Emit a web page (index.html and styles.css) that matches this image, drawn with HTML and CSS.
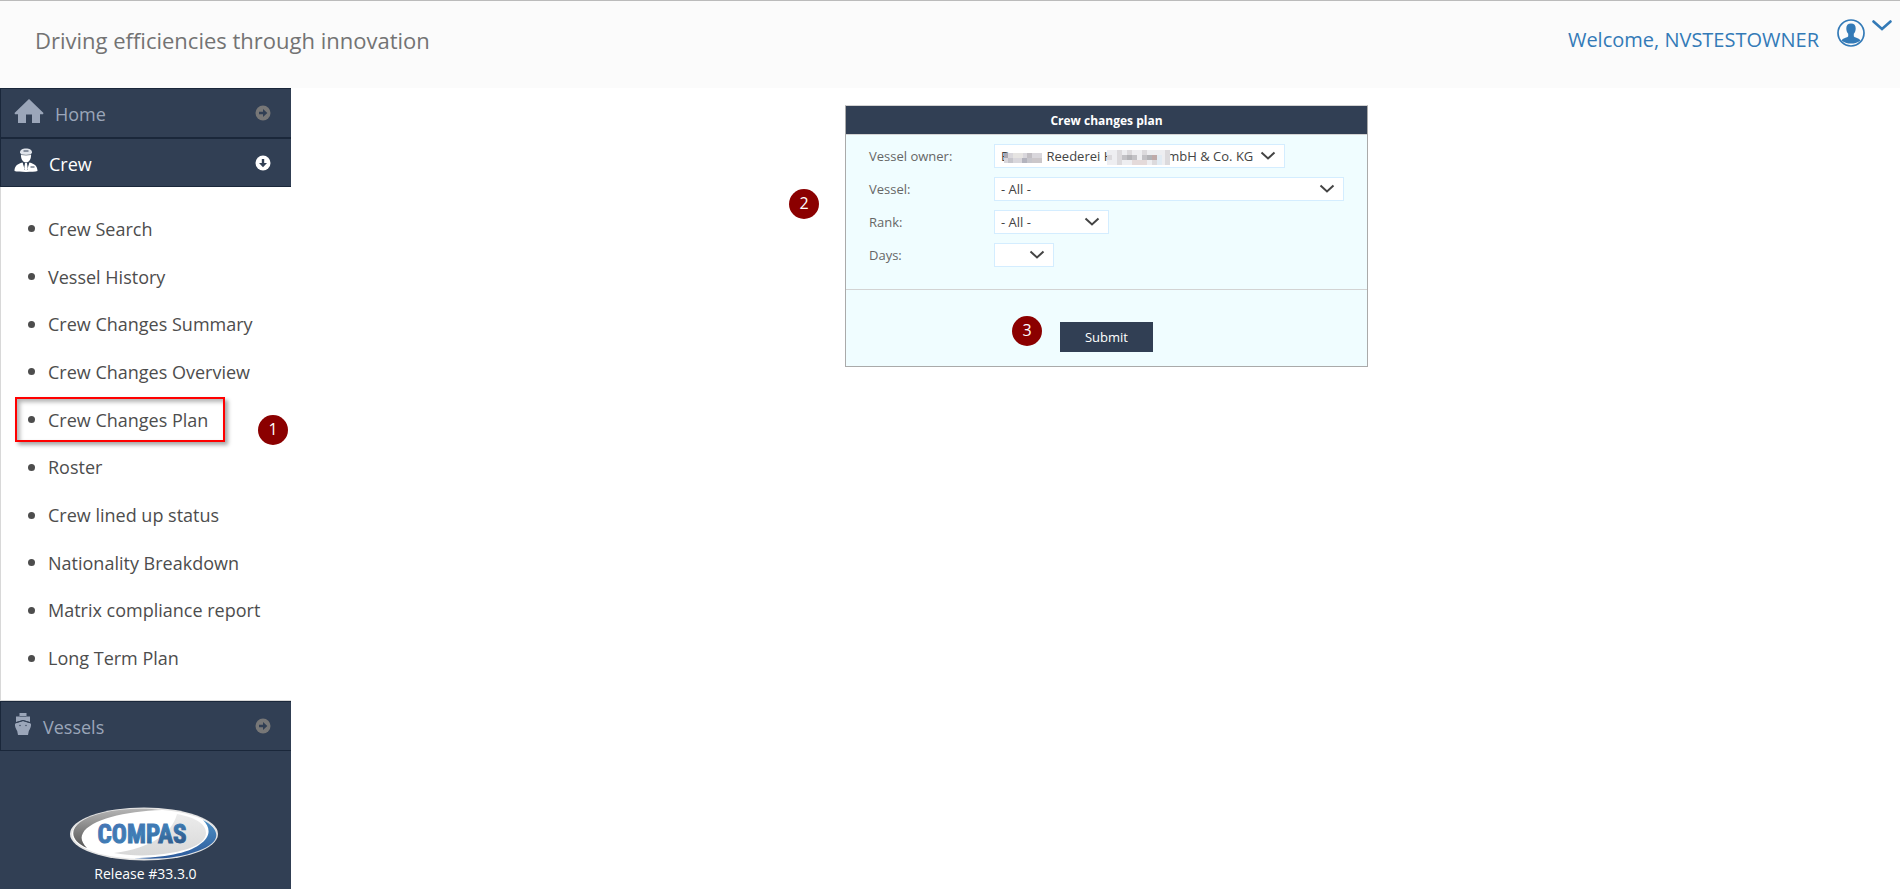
FILE: index.html
```
<!DOCTYPE html>
<html lang="en">
<head>
  <meta charset="UTF-8">
  <title>Crew changes plan</title>
  <link rel="stylesheet" href="styles.css">
</head>
<body>

  <header class="topbar">
    <div class="slogan">Driving efficiencies through innovation</div>
    <a href="#" class="user">
      <span class="welcome">Welcome, NVSTESTOWNER</span>
      <svg class="avatar" viewBox="0 0 28 28" width="28" height="28">
        <circle cx="14" cy="14" r="13" fill="none" stroke="#337ab7" stroke-width="1.7"/>
        <path d="M14 4.500c-3.200 0-4.800 1.900-4.700 5 0 2.200.7 4 1.900 5.200v2.500c-.4 1.500-6 1.700-6.500 4.500C7.500 23.800 11 24.600 14 24.600s6.500-.8 9.300-2.900c-.5-2.800-6.100-3-6.500-4.500v-2.500c1.200-1.200 1.900-3 1.900-5.200.1-3.100-1.500-5-4.700-5z" fill="#337ab7"/>
      </svg>
      <svg class="caret" viewBox="0 0 20 12" width="20" height="12">
        <path d="M1.500 2.500L10 10l8.500-7.500" fill="none" stroke="#337ab7" stroke-width="2.600" stroke-linecap="round"/>
      </svg>
    </a>
  </header>

  <div class="page">
    <nav class="sidebar">
      <a href="#" class="menu-item">
        <svg class="menu-icon" viewBox="0 0 30 26" width="30" height="26">
          <path d="M15 1l14.500 14-.5 1.300H26V25h-8v-8.500h-6V25H4v-8.700H1L.5 15z" fill="#9ba6b9"/>
        </svg>
        <span class="menu-text">Home</span>
        <svg class="arrow" viewBox="0 0 16 16" width="16" height="16">
          <circle cx="8" cy="8" r="7.500" fill="#777"/>
          <path d="M4 6.800h4V4l4.300 4L8 12V9.200H4z" fill="#313f54"/>
        </svg>
      </a>
      <a href="#" class="menu-item open">
        <svg class="menu-icon" viewBox="0 0 24 24" width="24" height="24">
          <path d="M6 4.500C6 1.800 8.500.5 12 .5s6 1.300 6 4l-1 1.800H7z" fill="#dfe3ea"/>
          <path d="M7 6h10c.4 4-1.300 8.500-5 8.500S6.600 10 7 6z" fill="#fff"/>
          <path d="M7 6.500q5 1.200 10 0" stroke="#313f54" stroke-width=".6" fill="none"/>
          <path d="M9.500 3h5" stroke="#313f54"/>
          <path d="M.5 23c0-5 3-7.300 8-8.500l3.500 8 3.500-8c5 1.200 8 3.500 8 8.500-4 1.200-19 1.200-23 0z" fill="#fff"/>
          <path d="M9.500 14.500L11 22M14.500 14.500L13 22M16.500 19h4" stroke="#313f54" fill="none"/>
          <path d="M11 15h2l.8 6-1.800 2-1.800-2z" fill="#fff"/>
        </svg>
        <span class="menu-text">Crew</span>
        <svg class="arrow" viewBox="0 0 16 16" width="16" height="16">
          <circle cx="8" cy="8" r="7.500" fill="#fff"/>
          <path d="M6.800 4v4H4l4 4.300L12 8H9.200V4z" fill="#313f54"/>
        </svg>
      </a>

      <ul class="submenu">
        <li><a href="#">Crew Search</a></li>
        <li><a href="#">Vessel History</a></li>
        <li><a href="#">Crew Changes Summary</a></li>
        <li><a href="#">Crew Changes Overview</a></li>
        <li class="marked"><a href="#">Crew Changes Plan</a><span class="step step-1">1</span></li>
        <li><a href="#">Roster</a></li>
        <li><a href="#">Crew lined up status</a></li>
        <li><a href="#">Nationality Breakdown</a></li>
        <li><a href="#">Matrix compliance report</a></li>
        <li><a href="#">Long Term Plan</a></li>
      </ul>

      <a href="#" class="menu-item">
        <svg class="menu-icon" viewBox="0 0 18 24" width="18" height="24">
          <path d="M5.500 1h7v3.500H16V10l-7-2-7 2V4.500h3.500z" fill="#9ba6b9"/>
          <path d="M5.500 4.500h7" stroke="#313f54" stroke-width=".6"/>
          <path d="M9 9l8 2.500c.3 3-.8 5.300-2.200 7.500l-.8 4H4l-.8-4C1.800 16.800.7 14.500 1 11.500z" fill="#9ba6b9"/>
          <path d="M1 11L9 8.500l8 2.500" stroke="#313f54" fill="none"/>
          <circle cx="6" cy="13.500" r=".7" fill="#313f54"/>
          <circle cx="12" cy="13.500" r=".7" fill="#313f54"/>
        </svg>
        <span class="menu-text">Vessels</span>
        <svg class="arrow" viewBox="0 0 16 16" width="16" height="16">
          <circle cx="8" cy="8" r="7.500" fill="#777"/>
          <path d="M4 6.800h4V4l4.300 4L8 12V9.200H4z" fill="#313f54"/>
        </svg>
      </a>

      <div class="release">
        <svg class="logo" viewBox="0 0 148 54" width="148" height="54">
          <defs>
            <linearGradient id="grey" x1="0" y1="0" x2="0" y2="1">
              <stop offset="0" stop-color="#b5b5b5"/>
              <stop offset="1" stop-color="#555"/>
            </linearGradient>
            <linearGradient id="blue" x1="0" y1="0" x2="0" y2="1">
              <stop offset="0" stop-color="#4c8fc4"/>
              <stop offset="1" stop-color="#2d5a9b"/>
            </linearGradient>
            <linearGradient id="shade" x1="0" y1="0" x2="0" y2="1">
              <stop offset="0" stop-color="#ececec"/>
              <stop offset="1" stop-color="#d8d8d8"/>
            </linearGradient>
            <linearGradient id="letters" x1="0" y1="0" x2="1" y2="1">
              <stop offset="0" stop-color="#4673b4"/>
              <stop offset=".5" stop-color="#3f7db5"/>
              <stop offset="1" stop-color="#2a4f7c"/>
            </linearGradient>
          </defs>
          <ellipse cx="74" cy="27" rx="74" ry="26.500" fill="#e4e4e4"/>
          <ellipse cx="74" cy="27" rx="72" ry="25" fill="#fff"/>
          <path d="M17 41C-5 31-1 14 32 6 52 1 76 1 92 3 55 4 20 13 13 26c-3 5-1 10 4 15z" fill="url(#grey)"/>
          <path d="M107 7c21 4 29 11 29 19 0 13-26 20-52 22-16 1-28 0-40-2 38-5 58-20 63-39z" fill="url(#shade)"/>
          <path d="M133 13c19 10 18 23-5 31-18 7-42 9-64 7 30 0 54-5 65-13 12-8 12-17 4-25z" fill="url(#blue)"/>
          <text x="72" y="36" text-anchor="middle" class="logo-text">COMPAS</text>
        </svg>
        <div class="version">Release #33.3.0</div>
      </div>
    </nav>

    <main class="content">
      <form class="panel">
        <h1 class="panel-title">Crew changes plan</h1>
        <div class="fields">
          <label for="owner">Vessel owner:</label>
          <div class="field">
            <select id="owner" class="owner">
              <option>B&nbsp;&nbsp;&nbsp;&nbsp;&nbsp;&nbsp;&nbsp;&nbsp;&nbsp;&nbsp; Reederei H&nbsp;&nbsp;&nbsp;&nbsp;&nbsp;&nbsp;&nbsp;&nbsp;&nbsp;&nbsp;&nbsp;&nbsp;&nbsp;&nbsp;&nbsp;&nbsp;mbH &amp; Co. KG</option>
            </select>
            <svg class="mask mask-1" viewBox="0 0 38 10" width="38" height="10">
              <path d="M0 0h38v10H0z" fill="#d9d7dc"/>
              <path d="M0 0h4v5H0z" fill="#aaa9b3"/>
              <path d="M9 0h10v5H9z" fill="#e6e4e2"/>
              <path d="M4 5h5v5H4zM23 5h5v5h-5z" fill="#c6c5cb"/>
              <path d="M18 5h5v5h-5z" fill="#b3b3bd"/>
              <path d="M23 0h5v5h-5z" fill="#c2bfc4"/>
              <path d="M28 5h10v5H28z" fill="#cbc7ca"/>
            </svg>
            <svg class="mask mask-2" viewBox="0 0 63 15" width="63" height="15">
              <path d="M0 0h63v15H0z" fill="#eeeef1"/>
              <path d="M0 5h5v5H0zM10 0h5v15h-5zM20 0h5v5h-5zM35 0h5v5h-5zM45 10h5v5h-5zM58 0h5v15h-5z" fill="#dcdadd"/>
              <path d="M15 5h5v5h-5zM25 5h5v5h-5zM35 5h5v5h-5z" fill="#c3c2c6"/>
              <path d="M20 5h5v5h-5zM40 5h5v5h-5z" fill="#b3b3b7"/>
              <path d="M45 5h5v5h-5z" fill="#bfaaa9"/>
              <path d="M50 5h5v10h-5z" fill="#e2ebf3"/>
              <path d="M25 10h15v5H25z" fill="#e4dada"/>
            </svg>
          </div>
          <label for="vessel">Vessel:</label>
          <div class="field"><select id="vessel" class="vessel"><option>- All -</option></select></div>
          <label for="rank">Rank:</label>
          <div class="field"><select id="rank" class="rank"><option>- All -</option></select></div>
          <label for="days">Days:</label>
          <div class="field"><select id="days" class="days"><option></option></select></div>
        </div>
        <div class="actions">
          <button type="submit">Submit</button>
          <span class="step step-3">3</span>
        </div>
        <span class="step step-2">2</span>
      </form>
    </main>
  </div>

</body>
</html>
```

FILE: styles.css
```
*,
*::before,
*::after {
  box-sizing: border-box;
}
body {
  margin: 0;
  min-height: 100vh;
  display: flex;
  flex-direction: column;
  font-family: "Segoe UI", "Open Sans", sans-serif;
  font-size: 13px;
  color: #666;
  background: #fff;
}
a {
  text-decoration: none;
}
.topbar {
  display: flex;
  justify-content: space-between;
  height: 88px;
  padding: 0 8px 0 35px;
  border-top: 1px solid #bbb;
  background: #fbfbfb;
}
.slogan {
  font-size: 22px;
  line-height: 78px;
  color: #737373;
}
.user {
  display: flex;
  align-items: flex-start;
  color: #337ab7;
}
.welcome {
  font-size: 20px;
  line-height: 78px;
}
.avatar {
  margin: 18px 7px 0 18px;
}
.caret {
  margin-top: 18px;
}
.page {
  flex: 1;
  display: flex;
}
.sidebar {
  width: 291px;
  display: flex;
  flex-direction: column;
  background: #313f54;
}
.menu-item {
  display: flex;
  align-items: center;
  height: 50px;
  padding: 0 20px 0 13px;
  border: 1px solid #1a273a;
  border-right: 0;
  font-size: 18px;
  color: #9ba6b9;
}
.menu-item.open {
  height: 49px;
  color: #fff;
}
.menu-icon {
  margin-bottom: 5px;
}
.menu-text {
  flex: 1;
  margin-left: 11px;
  padding-top: 2px;
}
.submenu {
  flex: 1;
  display: grid;
  grid-auto-rows: 1fr;
  margin: 0;
  padding: 18px 0;
  list-style: none;
  background: #fff;
  border-left: 1px solid #d8d8d8;
  border-bottom: 1px solid #d8d8d8;
}
.submenu li {
  position: relative;
  display: flex;
  align-items: center;
  padding-left: 27px;
}
.submenu li::before {
  content: "";
  width: 7px;
  height: 7px;
  margin-right: 13px;
  border-radius: 50%;
  background: #4d4d4d;
}
.submenu a {
  font-size: 18px;
  line-height: 24px;
  color: #4d4d4d;
}
/* highlight frame around the entry */
.marked::after {
  content: "";
  position: absolute;
  left: 14px;
  top: 1px;
  width: 210px;
  height: 45px;
  border: 2px solid #f00;
  box-shadow: 3px 3px 4px rgba(0,0,0,0.35), inset 3px 3px 4px rgba(0,0,0,0.3);
}
.step {
  position: absolute;
  width: 30px;
  height: 30px;
  border-radius: 50%;
  background: #8b0000;
  color: #fff;
  font-size: 16px;
  line-height: 29px;
  text-align: center;
}
.step-1 {
  left: 257px;
  top: 19px;
}
.step-2 {
  left: -57px;
  top: 83px;
}
.step-3 {
  left: 166px;
  top: 26px;
}
.release {
  height: 138px;
  padding: 56px 3px 0 0;
  text-align: center;
  color: #fff;
}
.logo {
  display: block;
  margin: 0 auto;
}
.logo-text {
  font-family: Impact, "Roboto Condensed", "Liberation Sans Narrow", "Liberation Sans", sans-serif;
  font-size: 25px;
  font-weight: bold;
  fill: url(#letters);
  stroke: url(#letters);
}
.version {
  padding-left: 3px;
  font-size: 14px;
  line-height: 26px;
}
.content {
  flex: 1;
  padding: 17px 0 0 22px;
}
.panel {
  position: relative;
  width: 523px;
  margin: 0 auto;
  border: 1px solid #aaa;
  border-top-color: #d3d3d3;
  background: #f0fdff;
}
.panel-title {
  margin: 0;
  padding-top: 2px;
  border-bottom: 1px solid #d3d3d3;
  background: #313f54;
  color: #fff;
  font-size: 12px;
  line-height: 26px;
  text-align: center;
}
.fields {
  display: grid;
  grid-template-columns: 125px 1fr;
  row-gap: 9px;
  align-items: center;
  padding: 9px 23px 22px;
  border-bottom: 1px solid #d3d3d3;
}
.field {
  position: relative;
  height: 24px;
}
select {
  appearance: none;
  height: 24px;
  padding: 0 26px 0 6px;
  border: 1px solid #d4edff;
  border-radius: 0;
  background: #fff url("data:image/svg+xml,%3Csvg xmlns='http://www.w3.org/2000/svg' width='16' height='10'%3E%3Cpath d='M1.500 1.500L8 7.500l6.500-6' fill='none' stroke='%23444' stroke-width='2'/%3E%3C/svg%3E") no-repeat right 8px center;
  font-family: inherit;
  font-size: 13px;
  color: #444;
}
.owner {
  width: 291px;
}
.vessel {
  width: 350px;
}
.rank {
  width: 115px;
}
.days {
  width: 60px;
}
/* hidden parts of the owner name */
.mask {
  position: absolute;
}
.mask-1 {
  left: 10px;
  top: 9px;
}
.mask-2 {
  left: 113px;
  top: 6px;
}
.actions {
  position: relative;
  padding: 32px 0 14px;
  text-align: center;
}
button {
  width: 93px;
  height: 30px;
  border: 0;
  background: #313f54;
  color: #fff;
  font-family: inherit;
  font-size: 13px;
  cursor: pointer;
}
```
